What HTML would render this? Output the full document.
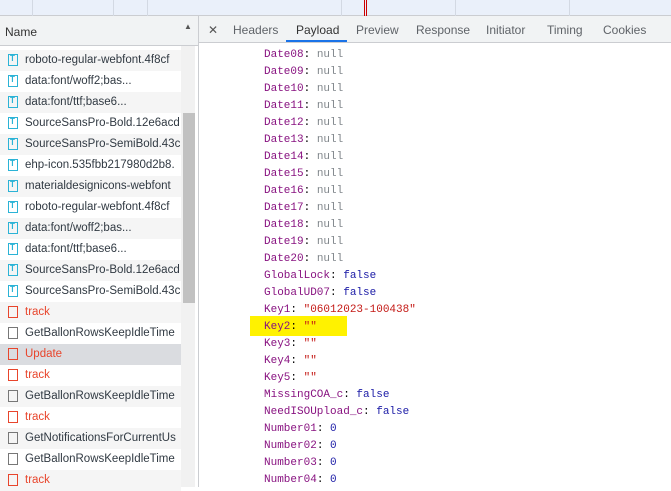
<!DOCTYPE html>
<html><head><style>
*{margin:0;padding:0;box-sizing:border-box}
body{width:671px;height:487px;overflow:hidden;background:#fff;font-family:"Liberation Sans",sans-serif;position:relative}
.top{position:absolute;left:0;top:0;width:671px;height:16px;background:#eaf0fa;border-bottom:1px solid #cbcdd1}
.top i{position:absolute;top:0;width:1px;height:16px;background:#d3d9e3}
.left{position:absolute;left:0;top:16px;width:198px;height:471px;background:#fff}
.hdr{position:absolute;left:0;top:0;width:198px;height:30px;background:#f1f3f4;border-bottom:1px solid #cbcdd1;font-size:12px;color:#333;padding:9px 0 0 5px}
.sb{position:absolute;left:181px;top:30px;width:14px;height:441px;background:#f1f1f1}
.th{position:absolute;left:183px;top:97px;width:12px;height:190px;background:#c1c1c1}
.row{position:absolute;left:0;width:181px;height:21px;font-size:11.5px;color:#303942;padding:4px 0 0 25px;white-space:nowrap;overflow:hidden}
.row.g{background:#f5f5f5}
.row.s{background:#dadce0}
.row.r{color:#e8452c}
.row:before{content:"";position:absolute;left:8px;top:4px;width:10px;height:12px;border:1px solid #777;box-sizing:border-box}
.row.r:before{border-color:#e8452c}
.row.f:before{border-color:#2bb3d6}
.row.f:after{content:"T";position:absolute;left:10px;top:4px;font-size:8px;color:#2bb3d6;font-weight:bold}
.div{position:absolute;left:198px;top:16px;width:1px;height:471px;background:#cbcdd1}
.tabs{position:absolute;left:199px;top:16px;width:472px;height:27px;background:#f1f3f4;border-bottom:1px solid #cbcdd1;font-size:12px;color:#5f6368}
.tabs span{position:absolute;top:7px}
.ul{position:absolute;left:87px;top:24px;width:61px;height:2px;background:#1a73e8}
.pl{position:absolute;left:264px;font-family:"Liberation Mono",monospace;font-size:11px;white-space:pre;line-height:17px}
.k{color:#881280}.n{color:#80868b}.b{color:#1a1aa6}.s2{color:#c41a16}
.hl{position:absolute;left:250px;top:316px;width:97px;height:20px;background:#fff200}
.red{position:absolute;left:364px;top:0;width:3px;height:16px;border-left:1px solid #c00;border-right:1px solid #c00}
</style></head><body>
<div class="top"><i style="left:32px"></i><i style="left:113px"></i><i style="left:147px"></i><i style="left:341px"></i><i style="left:455px"></i><i style="left:569px"></i></div>
<div class="red"></div>
<div class="left">
<div class="hdr">Name<span style="position:absolute;left:184px;top:6px;font-size:8px;color:#555">▲</span></div>
<div class="sb"></div><div class="th"></div>
</div>
<div class="row f g" style="top:50px">roboto-regular-webfont.4f8cf</div>
<div class="row f" style="top:71px">data:font/woff2;bas...</div>
<div class="row f g" style="top:92px">data:font/ttf;base6...</div>
<div class="row f" style="top:113px">SourceSansPro-Bold.12e6acd</div>
<div class="row f g" style="top:134px">SourceSansPro-SemiBold.43c</div>
<div class="row f" style="top:155px">ehp-icon.535fbb217980d2b8.</div>
<div class="row f g" style="top:176px">materialdesignicons-webfont</div>
<div class="row f" style="top:197px">roboto-regular-webfont.4f8cf</div>
<div class="row f g" style="top:218px">data:font/woff2;bas...</div>
<div class="row f" style="top:239px">data:font/ttf;base6...</div>
<div class="row f g" style="top:260px">SourceSansPro-Bold.12e6acd</div>
<div class="row f" style="top:281px">SourceSansPro-SemiBold.43c</div>
<div class="row r g" style="top:302px">track</div>
<div class="row" style="top:323px">GetBallonRowsKeepIdleTime</div>
<div class="row r s" style="top:344px">Update</div>
<div class="row r" style="top:365px">track</div>
<div class="row g" style="top:386px">GetBallonRowsKeepIdleTime</div>
<div class="row r" style="top:407px">track</div>
<div class="row g" style="top:428px">GetNotificationsForCurrentUs</div>
<div class="row" style="top:449px">GetBallonRowsKeepIdleTime</div>
<div class="row r g" style="top:470px">track</div>
<div class="div"></div>
<div class="tabs"><span style="left:9px;color:#555">✕</span><span style="left:34px">Headers</span><span style="left:97px;color:#333">Payload</span><span style="left:157px">Preview</span><span style="left:217px">Response</span><span style="left:287px">Initiator</span><span style="left:348px">Timing</span><span style="left:404px">Cookies</span><div class="ul"></div></div>
<div class="hl"></div>
<div class="pl" style="top:47px"><span class="k">Date08</span>: <span class="n">null</span>
<span class="k">Date09</span>: <span class="n">null</span>
<span class="k">Date10</span>: <span class="n">null</span>
<span class="k">Date11</span>: <span class="n">null</span>
<span class="k">Date12</span>: <span class="n">null</span>
<span class="k">Date13</span>: <span class="n">null</span>
<span class="k">Date14</span>: <span class="n">null</span>
<span class="k">Date15</span>: <span class="n">null</span>
<span class="k">Date16</span>: <span class="n">null</span>
<span class="k">Date17</span>: <span class="n">null</span>
<span class="k">Date18</span>: <span class="n">null</span>
<span class="k">Date19</span>: <span class="n">null</span>
<span class="k">Date20</span>: <span class="n">null</span>
<span class="k">GlobalLock</span>: <span class="b">false</span>
<span class="k">GlobalUD07</span>: <span class="b">false</span>
<span class="k">Key1</span>: <span class="s2">"06012023-100438"</span>
<span class="k">Key2</span>: <span class="s2">""</span>
<span class="k">Key3</span>: <span class="s2">""</span>
<span class="k">Key4</span>: <span class="s2">""</span>
<span class="k">Key5</span>: <span class="s2">""</span>
<span class="k">MissingCOA_c</span>: <span class="b">false</span>
<span class="k">NeedISOUpload_c</span>: <span class="b">false</span>
<span class="k">Number01</span>: <span class="b">0</span>
<span class="k">Number02</span>: <span class="b">0</span>
<span class="k">Number03</span>: <span class="b">0</span>
<span class="k">Number04</span>: <span class="b">0</span></div>
</body></html>
